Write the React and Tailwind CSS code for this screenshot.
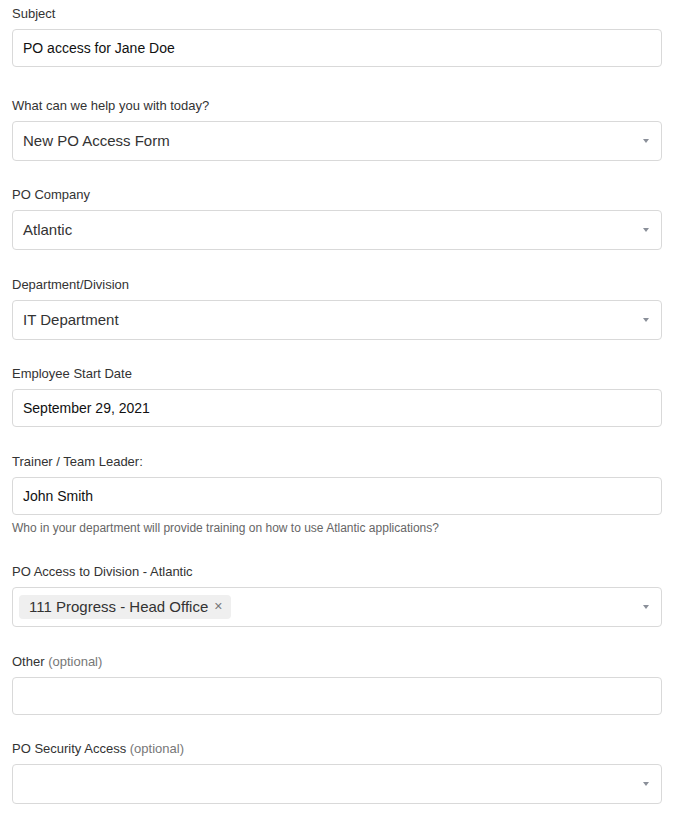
import { useState } from "react";

const font = { fontFamily: '"Liberation Sans", Arial, sans-serif' };

function Label({ children, optional }) {
  return (
    <div className="text-[13px] leading-5 text-[#333] mb-[5px]">
      {children}
      {optional && <span className="text-[#777]"> (optional)</span>}
    </div>
  );
}

function TextInput({ value }) {
  return (
    <div className="h-[38px] w-full rounded-[4px] border border-[#d9d9d9] bg-white px-[10px] flex items-center text-[14px] text-[#111]">
      {value}
    </div>
  );
}

function Arrow() {
  return (
    <svg width="6" height="4" viewBox="0 0 6 4" className="shrink-0">
      <path d="M0 0 L6 0 L3 4 Z" fill="#8a8f99" />
    </svg>
  );
}

function Select({ value, children }) {
  return (
    <div className="h-10 w-full rounded-[4px] border border-[#d9d9d9] bg-white pl-[10px] pr-[12px] flex items-center justify-between text-[15px] text-[#333]">
      <div className="flex items-center min-w-0">{children || value}</div>
      <Arrow />
    </div>
  );
}

export default function App() {
  const [tags, setTags] = useState(["111 Progress - Head Office"]);

  return (
    <div className="w-[678px] min-h-[821px] bg-white px-3 pt-1" style={font}>
      <div className="w-[650px]">
        {/* Subject */}
        <div className="mb-[29px]">
          <Label>Subject</Label>
          <TextInput value="PO access for Jane Doe" />
        </div>

        <div className="mb-6">
          <Label>What can we help you with today?</Label>
          <Select value="New PO Access Form" />
        </div>

        <div className="mb-[25px]">
          <Label>PO Company</Label>
          <Select value="Atlantic" />
        </div>

        <div className="mb-6">
          <Label>Department/Division</Label>
          <Select value="IT Department" />
        </div>

        <div className="mb-[25px]">
          <Label>Employee Start Date</Label>
          <TextInput value="September 29, 2021" />
        </div>

        <div className="mb-[26px]">
          <Label>Trainer / Team Leader:</Label>
          <TextInput value="John Smith" />
          <div className="mt-[5px] text-[12px] leading-4 text-[#666]">
            Who in your department will provide training on how to use Atlantic applications?
          </div>
        </div>

        <div className="mb-[25px]">
          <Label>PO Access to Division - Atlantic</Label>
          <Select>
            <div className="flex gap-1 -ml-[4px]">
              {tags.map((t) => (
                <span
                  key={t}
                  className="h-6 rounded-[4px] bg-[#efefef] pl-[10px] pr-[9px] flex items-center gap-[6px] text-[15px] text-[#333]"
                >
                  {t}
                  <button
                    onClick={() => setTags(tags.filter((x) => x !== t))}
                    className="text-[14px] leading-none text-[#777] -mt-[3px]"
                  >
                    ×
                  </button>
                </span>
              ))}
            </div>
          </Select>
        </div>

        <div className="mb-6">
          <Label optional>Other</Label>
          <TextInput value="" />
        </div>

        <div>
          <Label optional>PO Security Access</Label>
          <Select value="" />
        </div>
      </div>
    </div>
  );
}
